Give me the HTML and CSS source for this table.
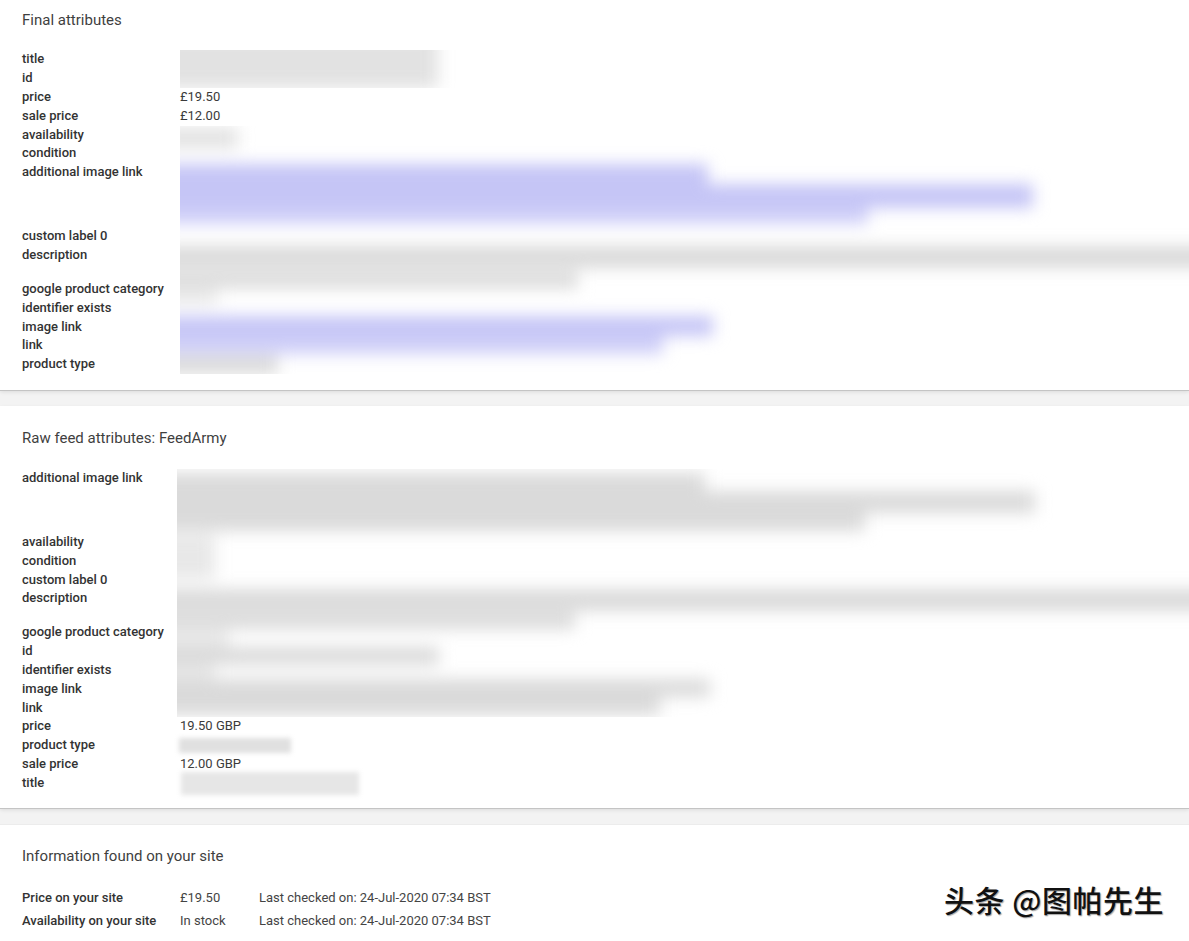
FILE: index.html
```html
<!DOCTYPE html>
<html lang="en">
<head>
<meta charset="utf-8">
<title>Item details</title>
<link rel="stylesheet" href="styles.css">
</head>
<body>
<main class="page">
  <section class="card card-first">
    <h2 class="card-title">Final attributes</h2>
    <div class="attrs">
      <div class="k">title</div>
      <div class="redact span2">
        <div class="redact-in">
          <div class="bar g1" style="width:276px;height:54px;margin-top:-16px"></div>
        </div>
      </div>
      <div class="k">id</div>
      <div class="k">price</div>
      <div class="v">£19.50</div>
      <div class="k">sale price</div>
      <div class="v">£12.00</div>
      <div class="k">availability</div>
      <div class="redact span10">
        <div class="redact-in">
          <div class="bar g1" style="width:76px;height:20px;margin-top:2px"></div>
          <div class="bar p" style="width:546px;height:20px;margin-top:16px"></div>
          <div class="bar p" style="width:871px;height:24px"></div>
          <div class="bar p2" style="width:706px;height:16px"></div>
          <div class="bar g" style="width:1060px;height:22px;margin-top:22px"></div>
          <div class="bar g" style="width:416px;height:16px;margin-top:4px"></div>
          <div class="bar g2" style="width:56px;height:14px;margin-top:2px"></div>
          <div class="bar p" style="width:551px;height:20px;margin-top:12px"></div>
          <div class="bar p2" style="width:501px;height:18px"></div>
          <div class="bar g" style="width:116px;height:18px;margin-top:2px"></div>
        </div>
      </div>
      <div class="k">condition</div>
      <div class="k tall4">additional image link</div>
      <div class="k">custom label 0</div>
      <div class="k tall2">description</div>
      <div class="k">google product category</div>
      <div class="k">identifier exists</div>
      <div class="k">image link</div>
      <div class="k">link</div>
      <div class="k">product type</div>
    </div>
  </section>

  <section class="card card-mid">
    <h2 class="card-title">Raw feed attributes: FeedArmy</h2>
    <div class="attrs">
      <div class="k tall4">additional image link</div>
      <div class="redact span10 raw">
        <div class="redact-in">
          <div class="bar g" style="width:546px;height:18px;margin-top:4px"></div>
          <div class="bar g" style="width:876px;height:22px"></div>
          <div class="bar g" style="width:706px;height:18px"></div>
          <div class="bar g2" style="width:56px;height:44px;margin-top:4px"></div>
          <div class="bar g" style="width:1060px;height:22px;margin-top:10px"></div>
          <div class="bar g" style="width:416px;height:16px;margin-top:2px"></div>
          <div class="bar g2" style="width:70px;height:16px;margin-top:2px"></div>
          <div class="bar g" style="width:280px;height:18px"></div>
          <div class="bar g2" style="width:56px;height:14px"></div>
          <div class="bar g" style="width:551px;height:18px"></div>
          <div class="bar g" style="width:501px;height:18px"></div>
        </div>
      </div>
      <div class="k">availability</div>
      <div class="k">condition</div>
      <div class="k">custom label 0</div>
      <div class="k tall2">description</div>
      <div class="k">google product category</div>
      <div class="k">id</div>
      <div class="k">identifier exists</div>
      <div class="k">image link</div>
      <div class="k">link</div>
      <div class="k">price</div>
      <div class="v">19.50 GBP</div>
      <div class="k">product type</div>
      <div class="v"><div class="smudge smudge-type"></div></div>
      <div class="k">sale price</div>
      <div class="v">12.00 GBP</div>
      <div class="k">title</div>
      <div class="v"><div class="smudge smudge-title"></div></div>
    </div>
  </section>

  <section class="card card-last">
    <h2 class="card-title">Information found on your site</h2>
    <div class="site-info">
      <div class="sk">Price on your site</div>
      <div class="sv">£19.50</div>
      <div class="sv">Last checked on: 24-Jul-2020 07:34 BST</div>
      <div class="sk">Availability on your site</div>
      <div class="sv">In stock</div>
      <div class="sv">Last checked on: 24-Jul-2020 07:34 BST</div>
    </div>
  </section>
</main>
<div class="watermark">头条 @图帕先生</div>
</body>
</html>
```

FILE: styles.css
```css
html, body {
  margin: 0;
  padding: 0;
}

body {
  background: #f3f3f3;
  font-family: Roboto, "Liberation Sans", Arial, sans-serif;
  color: #333;
  overflow: hidden;
}

.page {
  display: flex;
  flex-direction: column;
  gap: 16px;
  width: 1189px;
}

.card {
  background: #fff;
  padding: 22px 0 17px 22px;
  box-shadow: 0 1px 0 #c4c4c4, 0 2px 4px rgba(0, 0, 0, 0.10);
}

.card-first {
  padding-top: 10px;
  padding-bottom: 16px;
}

.card-first .card-title {
  margin-bottom: 20px;
}

.card-mid {
  padding-bottom: 15px;
}

.card-mid .card-title {
  margin-bottom: 21px;
}

.card-last {
  padding-top: 21px;
  min-height: 140px;
  box-shadow: none;
  border-top: 1px solid #ececec;
}

.card-last .card-title {
  margin-bottom: 20px;
}

.card-title {
  margin: 0 0 19px 0;
  font-size: 15px;
  line-height: 20px;
  font-weight: 400;
  color: #3f3f3f;
}

.attrs {
  display: grid;
  grid-template-columns: 158px 1fr;
  font-size: 13px;
}

.k {
  grid-column: 1;
  padding: 2px 0;
  line-height: 14.8px;
  font-weight: 500;
  color: #333;
  white-space: nowrap;
}

.v {
  grid-column: 2;
  padding: 2px 0;
  line-height: 14.8px;
  color: #3a3a3a;
}

.tall4 {
  min-height: 60px;
}

.tall2 {
  min-height: 30px;
}

.redact {
  grid-column: 2;
  overflow: hidden;
}

.span2 {
  grid-row: span 2;
}

.span10 {
  grid-row: span 10;
}

.raw {
  margin-left: -3px;
}

.redact-in {
  margin-left: -18px;
  filter: blur(8px);
}

.bar {
  display: block;
}

.g {
  background: #dadada;
}

.g1 {
  background: #e2e2e2;
}

.g2 {
  background: #e8e8e8;
}

.p {
  background: #c5c5f6;
}

.p2 {
  background: #cfcff8;
}

.smudge {
  background: #e0e0e0;
  filter: blur(2.5px);
}

.smudge-type {
  width: 112px;
  height: 15px;
  margin-left: -1px;
}

.smudge-title {
  width: 178px;
  height: 23px;
  margin: -4px 0 -4px 1px;
  background: #e6e6e6;
}

.site-info {
  display: grid;
  grid-template-columns: 158px 79px 1fr;
  font-size: 13px;
}

.sk {
  padding: 4px 0;
  line-height: 15px;
  font-weight: 500;
  color: #333;
  white-space: nowrap;
}

.sv {
  padding: 4px 0;
  line-height: 15px;
  color: #444;
  white-space: nowrap;
}

.watermark {
  position: absolute;
  left: 944px;
  top: 879px;
  font-family: "Noto Sans CJK SC", "Noto Sans", sans-serif;
  font-size: 30px;
  line-height: 40px;
  font-weight: 500;
  color: #111;
  letter-spacing: 0.5px;
  text-shadow: 1px 1px 1px rgba(0, 0, 0, 0.35), -1px -1px 0 #fff;
  white-space: nowrap;
}
```
